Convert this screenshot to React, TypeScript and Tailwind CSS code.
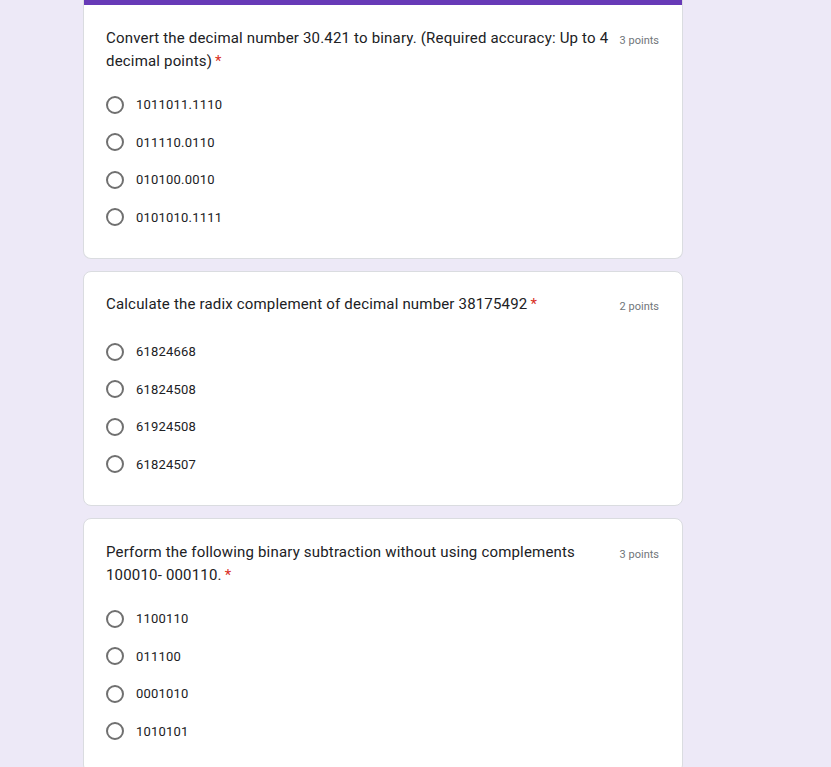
import React from 'react';

type Question = {
  title: string;
  points: string;
  options: string[];
  first?: boolean;
  gap: string;
  pad: string;
};

const questions: Question[] = [
  {
    title: 'Convert the decimal number 30.421 to binary. (Required accuracy: Up to 4 decimal points)',
    points: '3 points',
    options: ['1011011.1110', '011110.0110', '010100.0010', '0101010.1111'],
    first: true,
    gap: 'mt-[13px]',
    pad: 'pt-[22px]',
  },
  {
    title: 'Calculate the radix complement of decimal number 38175492',
    points: '2 points',
    options: ['61824668', '61824508', '61924508', '61824507'],
    gap: 'mt-[17px]',
    pad: 'pt-[21px]',
  },
  {
    title: 'Perform the following binary subtraction without using complements 100010- 000110.',
    points: '3 points',
    options: ['1100110', '011100', '0001010', '1010101'],
    gap: 'mt-[13px]',
    pad: 'pt-[22px]',
  },
];

function Radio() {
  return <span className="block w-[18px] h-[18px] rounded-full border-2 border-[#707070] shrink-0" />;
}

function QuestionCard({ q }: { q: Question }) {
  return (
    <div
      className={
        q.first
          ? 'bg-white rounded-b-lg border border-t-0 border-[#dadce0] overflow-hidden'
          : 'bg-white rounded-lg border border-[#dadce0]'
      }
    >
      {q.first && <div className="h-[5px] bg-[#673ab7]" />}
      <div className={`pl-[22px] pr-[23px] pb-[22px] ${q.pad}`}>
        {/* Title + points */}
        <div className="flex items-start">
          <div
            className="flex-1 text-[15px] leading-[23px] text-[#202124] tracking-[0.18px]"
            style={{ fontFamily: 'Roboto, "Liberation Sans", sans-serif' }}
          >
            {q.title}
            <span className="text-[#d93025] ml-[3px]">*</span>
          </div>
          <div
            className="shrink-0 ml-[10px] translate-y-[2px] text-[11px] leading-[23px] text-[#70757a]"
            style={{ fontFamily: 'Roboto, "Liberation Sans", sans-serif' }}
          >
            {q.points}
          </div>
        </div>

        {/* Options */}
        <div className={q.gap}>
          {q.options.map((o) => (
            <div key={o} className="h-[37.5px] flex items-center">
              <Radio />
              <span
                className="ml-[12px] text-[13px] tracking-[0.2px] text-[#202124]"
                style={{ fontFamily: 'Roboto, "Liberation Sans", sans-serif' }}
              >
                {o}
              </span>
            </div>
          ))}
        </div>
      </div>
    </div>
  );
}

export default function App() {
  return (
    <div className="min-h-screen bg-[#ede9f7]">
      <div className="ml-[83px] w-[600px] flex flex-col gap-3 pb-10">
        {questions.map((q) => (
          <QuestionCard key={q.title} q={q} />
        ))}
      </div>
    </div>
  );
}
